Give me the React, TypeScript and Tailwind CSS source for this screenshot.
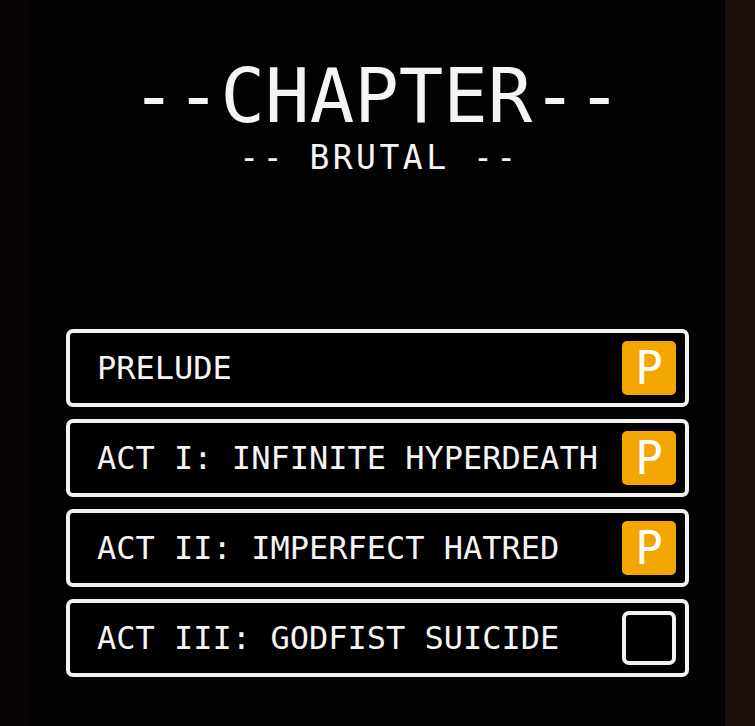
import React from "react";

const acts = [
  { title: "PRELUDE", rank: "P" },
  { title: "ACT I: INFINITE HYPERDEATH", rank: "P" },
  { title: "ACT II: IMPERFECT HATRED", rank: "P" },
  { title: "ACT III: GODFIST SUICIDE", rank: "" },
];

function RankBox({ rank }: { rank: string }) {
  if (!rank) {
    return (
      <div className="w-[54px] h-[54px] rounded-[7px] border-[4px] border-[#f2f2f2]" />
    );
  }
  return (
    <div className="w-[54px] h-[54px] rounded-[5px] bg-[#f4a600] flex items-center justify-center text-[46px] leading-none text-white">
      {rank}
    </div>
  );
}

export default function App() {
  return (
    <div
      className="flex w-[755px] h-[726px] text-[#f4f4f4] overflow-hidden"
      style={{ fontFamily: '"DejaVu Sans Mono", "Liberation Mono", monospace' }}
    >
      <div className="w-[28px] bg-[#090404]" />
      <div className="flex-1 bg-[#030202] flex flex-col items-center pt-[59px]">
        <div className="text-[74px] leading-none">--CHAPTER--</div>
        <div className="mt-[8px] text-[33px] leading-none tracking-[3.5px] ml-[6px]">-- BRUTAL --</div>

        <div className="mt-[155px] w-[623px] ml-[2px] flex flex-col gap-[12px]">
          {acts.map((a) => (
            <button
              key={a.title}
              className="h-[78px] w-full rounded-[7px] border-[4px] border-[#f2f2f2] bg-black flex items-center justify-between pl-[27px] pr-[9px]"
            >
              <span className="text-[32px] leading-none whitespace-pre">{a.title}</span>
              <RankBox rank={a.rank} />
            </button>
          ))}
        </div>
      </div>
      <div className="w-[30px] bg-[#1a0f0a]" />
    </div>
  );
}
